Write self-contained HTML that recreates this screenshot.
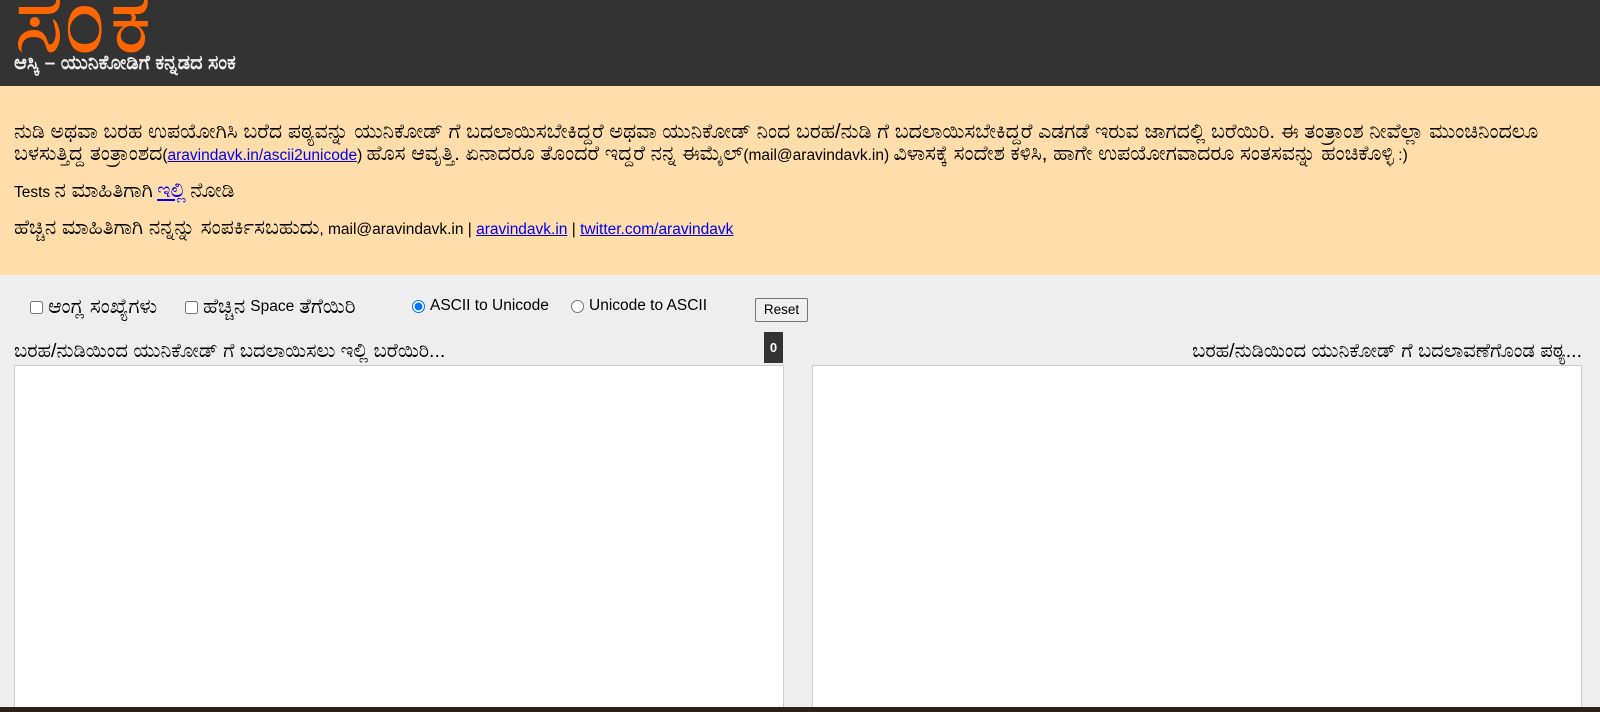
<!DOCTYPE html>
<html><head><meta charset="utf-8"><style>
body{margin:0;width:1600px;height:712px;overflow:hidden;background:#eee;font-family:"Liberation Sans",sans-serif;font-size:15px;color:#000;position:relative}
.hd{position:absolute;left:0;top:0;width:1600px;height:86px;background:#333}
.t{position:absolute;left:14px;top:-30px;font-size:94px;color:#f60;line-height:100px;letter-spacing:4px}
.st{position:absolute;left:14px;top:52px;font-size:19.5px;color:#eee;font-weight:bold}
.info{position:absolute;left:0;top:86px;width:1600px;height:189px;background:#ffdeac}
.info p{position:absolute;left:14px;margin:0;line-height:22px;font-size:15.5px;white-space:nowrap}
a{color:#00e;text-decoration:underline}
.ctl{position:absolute;top:297px;display:flex;align-items:center;gap:5px;font-size:15.5px}
input{margin:0}
.btn{position:absolute;left:755px;top:298px;width:51px;height:22px;border:1px solid #767676;background:#efefef;font-size:13.5px;text-align:center;line-height:22px;border-radius:2px}
.lab{position:absolute;top:342px;font-size:15.5px;white-space:nowrap}
.cnt{position:absolute;left:764px;top:332px;width:19px;height:31px;background:#333;color:#fff;font-weight:bold;font-size:13px;text-align:center;line-height:31px}
.ta{position:absolute;top:365px;width:768px;height:345px;background:#fff;border:1px solid #ccc}
.bot{position:absolute;left:0;top:707px;width:1600px;height:5px;background:#2b2119}
.k{font-size:20.5px;line-height:1}
.lab.k{font-size:19.5px}
</style></head><body>
<div class="hd"><div class="t">ಸಂಕ</div><div class="st">ಆಸ್ಕಿ – ಯುನಿಕೋಡಿಗೆ ಕನ್ನಡದ ಸಂಕ</div></div>
<div class="info">
<p style="top:36px"><span class="k">ನುಡಿ ಅಥವಾ ಬರಹ ಉಪಯೋಗಿಸಿ ಬರೆದ ಪಠ್ಯವನ್ನು ಯುನಿಕೋಡ್ ಗೆ ಬದಲಾಯಿಸಬೇಕಿದ್ದರೆ ಅಥವಾ ಯುನಿಕೋಡ್ ನಿಂದ ಬರಹ/ನುಡಿ ಗೆ ಬದಲಾಯಿಸಬೇಕಿದ್ದರೆ ಎಡಗಡೆ ಇರುವ ಜಾಗದಲ್ಲಿ ಬರೆಯಿರಿ. ಈ ತಂತ್ರಾಂಶ ನೀವೆಲ್ಲಾ ಮುಂಚಿನಿಂದಲೂ</span></p>
<p style="top:58px"><span class="k">ಬಳಸುತ್ತಿದ್ದ ತಂತ್ರಾಂಶದ</span>(<a>aravindavk.in/ascii2unicode</a>) <span class="k">ಹೊಸ ಆವೃತ್ತಿ. ಏನಾದರೂ ತೊಂದರೆ ಇದ್ದರೆ ನನ್ನ ಈಮೈಲ್</span>(mail@aravindavk.in) <span class="k">ವಿಳಾಸಕ್ಕೆ ಸಂದೇಶ ಕಳಿಸಿ, ಹಾಗೇ ಉಪಯೋಗವಾದರೂ ಸಂತಸವನ್ನು ಹಂಚಿಕೊಳ್ಳಿ</span> :)</p>
<p style="top:95px">Tests <span class="k">ನ ಮಾಹಿತಿಗಾಗಿ</span> <a class="k">ಇಲ್ಲಿ</a> <span class="k">ನೋಡಿ</span></p>
<p style="top:132px"><span class="k">ಹೆಚ್ಚಿನ ಮಾಹಿತಿಗಾಗಿ ನನ್ನನ್ನು ಸಂಪರ್ಕಿಸಬಹುದು</span>, mail@aravindavk.in | <a>aravindavk.in</a> | <a>twitter.com/aravindavk</a></p>
</div>
<div class="ctl" style="left:30px"><input type="checkbox"> <span class="k">ಆಂಗ್ಲ ಸಂಖ್ಯೆಗಳು</span></div>
<div class="ctl" style="left:185px"><input type="checkbox"> <span class="k">ಹೆಚ್ಚಿನ</span> Space <span class="k">ತೆಗೆಯಿರಿ</span></div>
<div class="ctl" style="left:412px"><input type="radio" checked> ASCII to Unicode</div>
<div class="ctl" style="left:571px"><input type="radio"> Unicode to ASCII</div>
<div class="btn">Reset</div>
<div class="lab k" style="left:14px">ಬರಹ/ನುಡಿಯಿಂದ ಯುನಿಕೋಡ್ ಗೆ ಬದಲಾಯಿಸಲು ಇಲ್ಲಿ ಬರೆಯಿರಿ...</div>
<div class="cnt">0</div>
<div class="lab k" style="right:18px">ಬರಹ/ನುಡಿಯಿಂದ ಯುನಿಕೋಡ್ ಗೆ ಬದಲಾವಣೆಗೊಂಡ ಪಠ್ಯ...</div>
<div class="ta" style="left:14px"></div>
<div class="ta" style="left:812px"></div>
<div class="bot"></div>
</body></html>
